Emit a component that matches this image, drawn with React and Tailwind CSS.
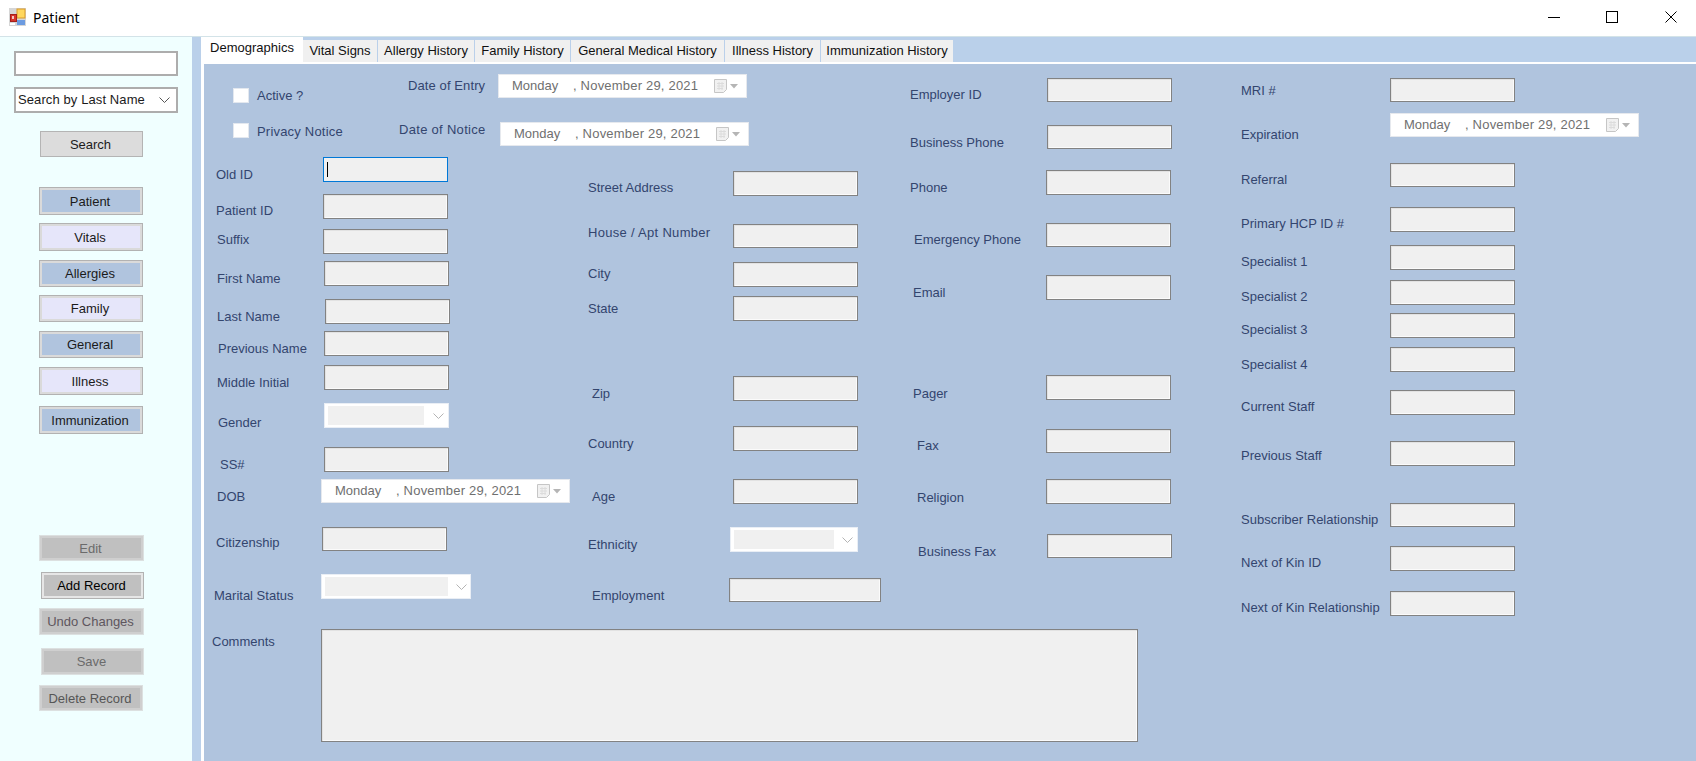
const Box = ({ w = 'w-[125px]', h = 'h-[25px]' }) => (
  <div className={`${w} ${h} bg-[#f0f0f0] border border-[#828282] shadow-[inset_1px_1px_0_#e2e2e2,inset_-1px_-1px_0_#fbfbfb]`}></div>
);

const Chevron = ({ cls }) => (
  <svg className={cls} width="11" height="6" viewBox="0 0 11 6" fill="none" stroke="currentColor" strokeWidth="1">
    <path d="M0.5 0.5 L5.5 5.5 L10.5 0.5" />
  </svg>
);

const Combo = ({ w, inner, chev }) => (
  <div className={`${w} h-[25px] bg-white border border-[#e9eef5] flex items-center pl-[3px]`}>
    <div className={`${inner} h-[19px] bg-[#f0f0f0]`}></div>
    <Chevron cls={`${chev} text-[#b4b4b4]`} />
  </div>
);

const DateBox = ({ h = 'h-[24px]' }) => (
  <div className={`w-[249px] ${h} bg-white border border-[#e6e9ee] flex items-center text-[#6f6f6f]`}>
    <span className="ml-[13px] w-[61px]">Monday</span>
    <span className="w-[141px] tracking-[0.2px]">, November 29, 2021</span>
    <svg width="24" height="16" viewBox="0 0 24 16" className="shrink-0">
      <path d="M0.5 1.5 H12.5 V11.5 L9.5 14.5 H0.5 Z" fill="#f1f1f1" stroke="#c6c6c6" />
      <path d="M3 5.5 H10 M3 8 H10 M3 10.5 H9 M5 4 V12 M8 4 V12" stroke="#dcdcdc" strokeWidth="1" />
      <path d="M16 6 H24 L20 10.5 Z" fill="#b5b5b5" />
    </svg>
  </div>
);

const Row = ({ h, lab, text, children }) => (
  <div className={`flex items-start ${h}`}>
    <div className={`${lab} mt-[1px] leading-4 whitespace-nowrap shrink-0`}>{text}</div>
    {children}
  </div>
);

const SideBtn = ({ cls, fill, text, children }) => (
  <button className={`${cls} border border-[#b2b2b2] bg-[#dadada] p-[2px] shrink-0 block`}>
    <span className={`${fill} ${text} h-full w-full flex items-center justify-center pt-[1px] pr-[2px]`}>{children}</span>
  </button>
);

const OffBtn = ({ cls, text = 'text-[#6b6b6b]', children }) => (
  <button className={`${cls} border border-[#dce0e0] bg-[#cfcfcf] p-[2px] shrink-0 block`}>
    <span className={`bg-[#c0c0c0] ${text} h-full w-full flex items-center justify-center pt-[1px] pr-[2px]`}>{children}</span>
  </button>
);

const Tab = ({ w, children }) => (
  <div className={`${w} h-[22px] mt-[3px] mr-[1px] bg-[#f0f0f0] flex items-center justify-center text-[#111111]`}>{children}</div>
);

function Sidebar() {
  return (
    <aside className="w-[192px] shrink-0 bg-[#f0ffff] flex flex-col text-[#1b1b1b]">
      <div className="ml-[14px] mt-[14px] w-[164px] h-[25px] bg-white border-2 border-[#adadad]"></div>
      <div className="ml-[14px] mt-[11px] w-[164px] h-[26px] bg-white border-2 border-[#adadad] flex items-center justify-between pl-[2px] pr-[6px]">
        <span className="whitespace-nowrap tracking-[0.1px]">Search by Last Name</span>
        <Chevron cls="text-[#555555]" />
      </div>
      <button className="ml-[40px] mt-[18px] w-[103px] h-[26px] shrink-0 bg-[#dcdcdc] border border-[#b4b4b4] pt-[1px] pr-[2px]">Search</button>

      <SideBtn cls="ml-[39px] mt-[30px] w-[104px] h-[28px]" fill="bg-[#b0c4de]">Patient</SideBtn>
      <SideBtn cls="ml-[39px] mt-[8px] w-[104px] h-[28px]" fill="bg-[#e6e6fa]">Vitals</SideBtn>
      <SideBtn cls="ml-[39px] mt-[9px] w-[104px] h-[27px]" fill="bg-[#b0c4de]">Allergies</SideBtn>
      <SideBtn cls="ml-[39px] mt-[8px] w-[104px] h-[27px]" fill="bg-[#e6e6fa]">Family</SideBtn>
      <SideBtn cls="ml-[39px] mt-[9px] w-[104px] h-[27px]" fill="bg-[#b0c4de]">General</SideBtn>
      <SideBtn cls="ml-[39px] mt-[9px] w-[104px] h-[28px]" fill="bg-[#e6e6fa]">Illness</SideBtn>
      <SideBtn cls="ml-[39px] mt-[11px] w-[104px] h-[28px]" fill="bg-[#b0c4de]">Immunization</SideBtn>

      <OffBtn cls="ml-[39px] mt-[101px] w-[105px] h-[26px]">Edit</OffBtn>
      <SideBtn cls="ml-[41px] mt-[11px] w-[103px] h-[27px] !bg-[#e6e6e6]" fill="bg-[#c0c0c0]" text="text-black">Add Record</SideBtn>
      <OffBtn cls="ml-[39px] mt-[9px] w-[105px] h-[27px]" text="text-[#5e565e]">Undo Changes</OffBtn>
      <OffBtn cls="ml-[41px] mt-[13px] w-[103px] h-[27px]">Save</OffBtn>
      <OffBtn cls="ml-[39px] mt-[10px] w-[104px] h-[26px]" text="text-[#565656]">Delete Record</OffBtn>
    </aside>
  );
}

function ColumnOne() {
  return (
    <div className="w-[384px] shrink-0 flex flex-col">
      <Row h="h-[37px]" lab="w-[119px] pl-[12px] pt-[9px]" text="Old ID">
        <div className="w-[125px] h-[25px] bg-[#f0f0f0] border border-[#0078d7] flex items-center pl-[3px]">
          <span className="w-[1px] h-[15px] bg-black"></span>
        </div>
      </Row>
      <Row h="h-[35px]" lab="w-[119px] pl-[12px] pt-[8px]" text="Patient ID"><Box /></Row>
      <Row h="h-[32px]" lab="w-[119px] pl-[13px] pt-[2px]" text="Suffix"><Box /></Row>
      <Row h="h-[38px]" lab="w-[120px] pl-[13px] pt-[9px]" text="First Name"><Box /></Row>
      <Row h="h-[32px]" lab="w-[121px] pl-[13px] pt-[9px]" text="Last Name"><Box /></Row>
      <Row h="h-[34px]" lab="w-[120px] pl-[14px] pt-[9px]" text="Previous Name"><Box /></Row>
      <Row h="h-[38px]" lab="w-[120px] pl-[13px] pt-[9px]" text="Middle Initial"><Box /></Row>
      <Row h="h-[44px]" lab="w-[120px] pl-[14px] pt-[11px]" text="Gender">
        <Combo w="w-[125px]" inner="w-[96px]" chev="ml-[9px]" />
      </Row>
      <Row h="h-[32px]" lab="w-[120px] pl-[16px] pt-[9px]" text="SS#"><Box /></Row>
      <Row h="h-[48px]" lab="w-[117px] pl-[13px] pt-[9px]" text="DOB"><DateBox /></Row>
      <Row h="h-[47px]" lab="w-[118px] pl-[12px] pt-[7px]" text="Citizenship"><Box h="h-[24px]" /></Row>
      <Row h="h-[25px]" lab="w-[117px] pl-[10px] pt-[13px]" text="Marital Status">
        <Combo w="w-[150px]" inner="w-[123px]" chev="ml-[8px]" />
      </Row>
    </div>
  );
}

function ColumnTwo() {
  return (
    <div className="w-[322px] shrink-0 flex flex-col pt-[14px]">
      <Row h="h-[53px]" lab="w-[145px] pt-[8px]" text="Street Address"><Box /></Row>
      <Row h="h-[38px]" lab="w-[145px] tracking-[0.3px]" text="House / Apt Number"><Box h="h-[24px]" /></Row>
      <Row h="h-[34px]" lab="w-[145px] pt-[3px]" text="City"><Box /></Row>
      <Row h="h-[80px]" lab="w-[145px] pt-[4px]" text="State"><Box /></Row>
      <Row h="h-[50px]" lab="w-[145px] pl-[4px] pt-[9px]" text="Zip"><Box /></Row>
      <Row h="h-[53px]" lab="w-[145px] pt-[9px]" text="Country"><Box /></Row>
      <Row h="h-[48px]" lab="w-[145px] pl-[4px] pt-[9px]" text="Age"><Box /></Row>
      <Row h="h-[51px]" lab="w-[142px] pt-[9px]" text="Ethnicity">
        <Combo w="w-[128px]" inner="w-[100px]" chev="ml-[8px]" />
      </Row>
      <Row h="h-[24px]" lab="w-[141px] pl-[4px] pt-[9px]" text="Employment"><Box w="w-[152px]" h="h-[24px]" /></Row>
    </div>
  );
}

function ColumnThree() {
  return (
    <div className="w-[331px] shrink-0 flex flex-col pt-[14px]">
      <Row h="h-[47px]" lab="w-[137px] pt-[8px]" text="Employer ID"><Box h="h-[24px]" /></Row>
      <Row h="h-[45px]" lab="w-[137px] pt-[9px]" text="Business Phone"><Box h="h-[24px]" /></Row>
      <Row h="h-[53px]" lab="w-[136px] pt-[9px]" text="Phone"><Box /></Row>
      <Row h="h-[52px]" lab="w-[136px] pl-[4px] pt-[8px]" text="Emergency Phone"><Box h="h-[24px]" /></Row>
      <Row h="h-[100px]" lab="w-[136px] pl-[3px] pt-[9px]" text="Email"><Box /></Row>
      <Row h="h-[54px]" lab="w-[136px] pl-[3px] pt-[10px]" text="Pager"><Box /></Row>
      <Row h="h-[50px]" lab="w-[136px] pl-[7px] pt-[8px]" text="Fax"><Box h="h-[24px]" /></Row>
      <Row h="h-[55px]" lab="w-[136px] pl-[7px] pt-[10px]" text="Religion"><Box /></Row>
      <Row h="h-[24px]" lab="w-[137px] pl-[8px] pt-[9px]" text="Business Fax"><Box h="h-[24px]" /></Row>
    </div>
  );
}

function ColumnFour() {
  return (
    <div className="flex flex-col pt-[14px]">
      <Row h="h-[35px]" lab="w-[149px] pt-[4px]" text="MRI #"><Box h="h-[24px]" /></Row>
      <Row h="h-[50px]" lab="w-[149px] pt-[13px]" text="Expiration"><DateBox /></Row>
      <Row h="h-[44px]" lab="w-[149px] pt-[8px]" text="Referral"><Box h="h-[24px]" /></Row>
      <Row h="h-[38px]" lab="w-[149px] pt-[8px]" text="Primary HCP ID #"><Box /></Row>
      <Row h="h-[35px]" lab="w-[149px] pt-[8px]" text="Specialist 1"><Box /></Row>
      <Row h="h-[33px]" lab="w-[149px] pt-[8px]" text="Specialist 2"><Box /></Row>
      <Row h="h-[34px]" lab="w-[149px] pt-[8px]" text="Specialist 3"><Box /></Row>
      <Row h="h-[43px]" lab="w-[149px] pt-[9px]" text="Specialist 4"><Box /></Row>
      <Row h="h-[51px]" lab="w-[149px] pt-[8px]" text="Current Staff"><Box /></Row>
      <Row h="h-[62px]" lab="w-[149px] pt-[6px]" text="Previous Staff"><Box /></Row>
      <Row h="h-[43px]" lab="w-[149px] pt-[8px]" text="Subscriber Relationship"><Box h="h-[24px]" /></Row>
      <Row h="h-[45px]" lab="w-[149px] pt-[8px]" text="Next of Kin ID"><Box /></Row>
      <Row h="h-[25px]" lab="w-[149px] pt-[8px]" text="Next of Kin Relationship"><Box /></Row>
    </div>
  );
}

export default function App() {
  return (
    <div className="h-screen w-full overflow-hidden flex flex-col bg-white text-[13px] font-['Liberation_Sans',Arial,sans-serif]">
      {/* title bar */}
      <div className="h-[37px] shrink-0 bg-white border-b border-[#d3e3e8] flex items-center pb-[2px] text-black">
        <svg className="ml-[9px]" width="17" height="18" viewBox="0 0 17 18">
          <rect x="0" y="0" width="17" height="18" fill="#d6d6d6" />
          <rect x="8" y="1" width="8" height="9" fill="#ffd75e" stroke="#d99a2b" />
          <rect x="1.5" y="6.5" width="6" height="7" fill="#d8342a" stroke="#a51f1a" />
          <rect x="3" y="8" width="2" height="3" fill="#f4c5bf" />
          <rect x="8" y="12" width="8" height="5" fill="#6c9be0" />
          <rect x="1" y="15" width="5" height="2" fill="#ffffff" />
        </svg>
        <span className="ml-[7px] text-[14px] font-['Noto_Sans',sans-serif]">Patient</span>
        <div className="ml-auto flex items-center">
          <svg className="mr-[46px]" width="12" height="1" viewBox="0 0 12 1"><path d="M0 0.5 H12" stroke="#000000" strokeWidth="1" /></svg>
          <svg className="mr-[47px]" width="12" height="12" viewBox="0 0 12 12"><rect x="0.5" y="0.5" width="11" height="11" fill="none" stroke="#000000" /></svg>
          <svg className="mr-[19px]" width="12" height="12" viewBox="0 0 12 12"><path d="M0.5 0.5 L11.5 11.5 M11.5 0.5 L0.5 11.5" stroke="#000000" strokeWidth="1" /></svg>
        </div>
      </div>

      <div className="flex-1 flex min-h-0">
        <Sidebar />

        <main className="flex-1 min-w-0 flex flex-col bg-[#bad0ea] pl-[9px]">
          {/* tabs */}
          <div className="h-[25px] shrink-0 flex items-start">
            <div className="w-[102px] h-[26px] bg-white flex items-center justify-center text-[#111111] pb-[4px] relative z-10">Demographics</div>
            <Tab w="w-[74px]">Vital Signs</Tab>
            <Tab w="w-[96px]">Allergy History</Tab>
            <Tab w="w-[95px]">Family History</Tab>
            <Tab w="w-[153px]">General Medical History</Tab>
            <Tab w="w-[95px]">Illness History</Tab>
            <div className="w-[132px] h-[22px] mt-[3px] bg-[#f0f0f0] flex items-center justify-center text-[#111111]">Immunization History</div>
          </div>

          {/* demographics page */}
          <div className="flex-1 min-h-0 flex flex-col bg-[#b0c4de] border-l-[3px] border-t-2 border-white text-[#33456e]">
            <div className="h-[565px] shrink-0 flex">
              <div className="w-[706px] shrink-0 flex flex-col">
                <div className="mt-[10px] h-[48px] flex items-start">
                  <div className="ml-[29px] mt-[14px] w-[16px] h-[15px] bg-white border border-[#e3e8ef]"></div>
                  <div className="ml-[8px] mt-[14px] w-[151px] leading-4">Active ?</div>
                  <div className="mt-[4px] w-[90px] leading-4 whitespace-nowrap tracking-[0.1px]">Date of Entry</div>
                  <DateBox />
                </div>
                <div className="h-[35px] flex items-start">
                  <div className="ml-[29px] mt-[1px] w-[16px] h-[15px] bg-white border border-[#e3e8ef]"></div>
                  <div className="ml-[8px] mt-[2px] w-[142px] leading-4 whitespace-nowrap tracking-[0.2px]">Privacy Notice</div>
                  <div className="w-[101px] leading-4 whitespace-nowrap tracking-[0.3px]">Date of Notice</div>
                  <DateBox />
                </div>
                <div className="flex">
                  <ColumnOne />
                  <ColumnTwo />
                </div>
              </div>
              <ColumnThree />
              <ColumnFour />
            </div>

            <Row h="h-[113px]" lab="w-[117px] pl-[8px] pt-[4px]" text="Comments">
              <Box w="w-[817px]" h="h-[113px]" />
            </Row>
          </div>
        </main>
      </div>
    </div>
  );
}
